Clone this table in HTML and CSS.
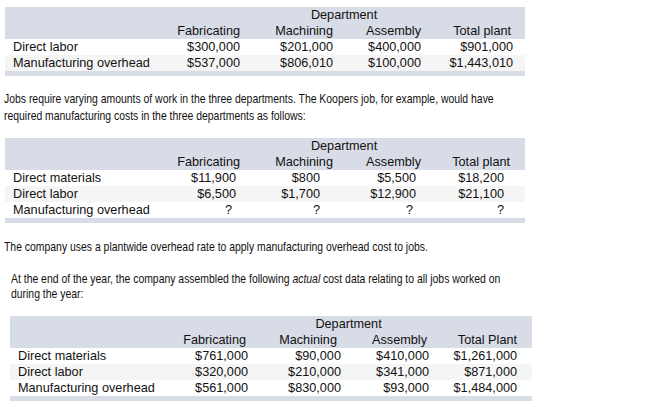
FILE: index.html
```html
<!DOCTYPE html>
<html>
<head>
<meta charset="utf-8">
<link rel="stylesheet" href="styles.css">
</head>
<body>
<table class="tbl t1">
  <colgroup><col class="c-lab"><col class="c-fab"><col class="c-mach"><col class="c-asm"><col class="c-tot"><col class="c-pad"></colgroup>
  <tr class="hd"><td></td><td colspan="4" class="dept">Department</td><td></td></tr>
  <tr class="hd"><td></td><td class="num">Fabricating</td><td class="num">Machining</td><td class="num">Assembly</td><td class="num h-tot">Total plant</td><td></td></tr>
  <tr class="w"><td class="lab">Direct labor</td><td class="num">$300,000</td><td class="num">$201,000</td><td class="num">$400,000</td><td class="num">$901,000</td><td></td></tr>
  <tr class="g"><td class="lab">Manufacturing overhead</td><td class="num">$537,000</td><td class="num">$806,010</td><td class="num">$100,000</td><td class="num">$1,443,010</td><td></td></tr>
  <tr class="bar"><td colspan="6"></td></tr>
</table>

<p class="para p1">Jobs require varying amounts of work in the three departments. The Koopers job, for example, would have required manufacturing costs in the three departments as follows:</p>

<table class="tbl t2">
  <colgroup><col class="c-lab"><col class="c-fab"><col class="c-mach"><col class="c-asm"><col class="c-tot"><col class="c-pad"></colgroup>
  <tr class="hd"><td></td><td colspan="4" class="dept">Department</td><td></td></tr>
  <tr class="hd"><td></td><td class="num">Fabricating</td><td class="num">Machining</td><td class="num">Assembly</td><td class="num h-tot">Total plant</td><td></td></tr>
  <tr class="w"><td class="lab">Direct materials</td><td class="num v-fab">$11,900</td><td class="num v-mach">$800</td><td class="num v-asm">$5,500</td><td class="num v-tot">$18,200</td><td></td></tr>
  <tr class="g"><td class="lab">Direct labor</td><td class="num v-fab">$6,500</td><td class="num v-mach">$1,700</td><td class="num v-asm">$12,900</td><td class="num v-tot">$21,100</td><td></td></tr>
  <tr class="w"><td class="lab">Manufacturing overhead</td><td class="num v-fab q-fab">?</td><td class="num v-mach">?</td><td class="num v-asm q-asm">?</td><td class="num v-tot">?</td><td></td></tr>
  <tr class="bar"><td colspan="6"></td></tr>
</table>

<p class="para p2">The company uses a plantwide overhead rate to apply manufacturing overhead cost to jobs.</p>

<p class="para p3">At the end of the year, the company assembled the following <em>actual</em> cost data relating to all jobs worked on during the year:</p>

<table class="tbl t3">
  <colgroup><col class="c-lab"><col class="c-fab"><col class="c-mach"><col class="c-asm"><col class="c-tot"><col class="c-pad"></colgroup>
  <tr class="hd"><td></td><td colspan="4" class="dept">Department</td><td></td></tr>
  <tr class="hd"><td></td><td class="num h-fab">Fabricating</td><td class="num h-mach">Machining</td><td class="num h-asm">Assembly</td><td class="num">Total Plant</td><td></td></tr>
  <tr class="w"><td class="lab">Direct materials</td><td class="num">$761,000</td><td class="num">$90,000</td><td class="num">$410,000</td><td class="num">$1,261,000</td><td></td></tr>
  <tr class="g"><td class="lab">Direct labor</td><td class="num">$320,000</td><td class="num">$210,000</td><td class="num">$341,000</td><td class="num">$871,000</td><td></td></tr>
  <tr class="w"><td class="lab">Manufacturing overhead</td><td class="num">$561,000</td><td class="num">$830,000</td><td class="num">$93,000</td><td class="num">$1,484,000</td><td></td></tr>
  <tr class="bar"><td colspan="6"></td></tr>
</table>
</body>
</html>
```

FILE: styles.css
```css
html, body {
  margin: 0;
  padding: 0;
  background: #ffffff;
}

body {
  font-family: "Liberation Sans", Arial, sans-serif;
  font-size: 12.7px;
  color: #111111;
}

.tbl {
  border-collapse: collapse;
  border-spacing: 0;
  table-layout: fixed;
}

.tbl td {
  padding: 0;
  height: 16px;
  line-height: 16px;
  white-space: nowrap;
  overflow: visible;
}

.tbl .hd td { background: #d8dce6; }
.tbl .w td { background: #ffffff; }
.tbl .g td { background: #f5f5f5; }
.tbl .bar td { background: #d8dce6; height: 5px; line-height: 5px; }

.lab { padding-left: 8px !important; }
.num { text-align: right; }
.dept { text-align: center; padding-left: 20px !important; }

/* table 1 */
.t1 { width: 520px; margin: 7px 0 0 5px; }
.t1 .c-lab { width: 150px; }
.t1 .c-fab { width: 85px; }
.t1 .c-mach { width: 93px; }
.t1 .c-asm { width: 88px; }
.t1 .c-tot { width: 92px; }
.t1 .c-pad { width: 12px; }
.t1 .h-tot { padding-right: 2px !important; }

/* table 2 */
.t2 { width: 520px; margin: 13px 0 0 5px; }
.t2 .c-lab { width: 150px; }
.t2 .c-fab { width: 85px; }
.t2 .c-mach { width: 93px; }
.t2 .c-asm { width: 88px; }
.t2 .c-tot { width: 92px; }
.t2 .c-pad { width: 12px; }
.t2 .h-tot { padding-right: 3px !important; }
.t2 .v-fab { padding-right: 4px !important; }
.t2 .v-mach { padding-right: 13px !important; }
.t2 .v-asm { padding-right: 5px !important; }
.t2 .v-tot { padding-right: 9px !important; }
.t2 .q-fab { padding-right: 8px !important; }
.t2 .q-asm { padding-right: 8px !important; }

/* table 3 */
.t3 { width: 522px; margin: 14px 0 0 10px; }
.t3 .c-lab { width: 150px; }
.t3 .c-fab { width: 88px; }
.t3 .c-mach { width: 93px; }
.t3 .c-asm { width: 88px; }
.t3 .c-tot { width: 88px; }
.t3 .c-pad { width: 15px; }
.t3 .h-fab { padding-right: 2px !important; }
.t3 .h-mach { padding-right: 4px !important; }
.t3 .h-asm { padding-right: 2px !important; }

/* paragraphs: narrow rendering of the sans face */
.para {
  font-family: "Liberation Sans", Arial, sans-serif;
  font-size: 12.7px;
  line-height: 17px;
  margin: 0;
  width: 606px;
  transform: scaleX(0.821);
  transform-origin: 0 0;
}
.para em { font-style: italic; }
.p1 { margin: 15px 0 0 4px; }
.p2 { margin: 16px 0 0 4px; }
.p3 { margin: 15.5px 0 0 11px; line-height: 15px; }
```
